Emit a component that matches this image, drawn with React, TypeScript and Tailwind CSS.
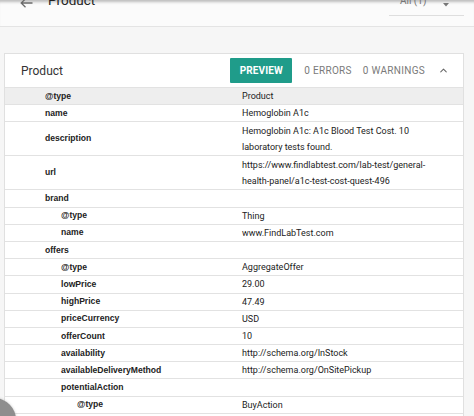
import { ChevronUp } from 'lucide-react';

type Row = {
  k: string;
  v: string[];
  level: number;
  head?: boolean;
};

const rows: Row[] = [
  { k: '@type', v: ['Product'], level: 0, head: true },
  { k: 'name', v: ['Hemoglobin A1c'], level: 0 },
  { k: 'description', v: ['Hemoglobin A1c: A1c Blood Test Cost. 10', 'laboratory tests found.'], level: 0 },
  { k: 'url', v: ['https://www.findlabtest.com/lab-test/general-', 'health-panel/a1c-test-cost-quest-496'], level: 0 },
  { k: 'brand', v: [''], level: 0 },
  { k: '@type', v: ['Thing'], level: 1 },
  { k: 'name', v: ['www.FindLabTest.com'], level: 1 },
  { k: 'offers', v: [''], level: 0 },
  { k: '@type', v: ['AggregateOffer'], level: 1 },
  { k: 'lowPrice', v: ['29.00'], level: 1 },
  { k: 'highPrice', v: ['47.49'], level: 1 },
  { k: 'priceCurrency', v: ['USD'], level: 1 },
  { k: 'offerCount', v: ['10'], level: 1 },
  { k: 'availability', v: ['http://schema.org/InStock'], level: 1 },
  { k: 'availableDeliveryMethod', v: ['http://schema.org/OnSitePickup'], level: 1 },
  { k: 'potentialAction', v: [''], level: 1 },
  { k: '@type', v: ['BuyAction'], level: 2 },
  { k: '', v: [''], level: 2 },
];

const indent = ['pl-[40px]', 'pl-[56px]', 'pl-[72px]'];

function DataRow({ row }: { row: Row }) {
  const tall = row.v.length > 1;
  return (
    <div
      className={`flex border-b border-[#e2e2e2] ${tall ? 'h-[34px]' : 'h-[17.2px]'} ${
        row.head ? 'bg-[#eeeeee]' : 'bg-white'
      }`}
    >
      <div
        className={`w-[232px] shrink-0 flex items-center ${indent[row.level]} font-['Liberation_Sans',sans-serif] font-bold text-[8.6px] text-[#222]`}
      >
        {row.k}
      </div>
      <div className="flex-1 flex flex-col justify-center pl-[5px] text-[9px] leading-[16px] text-[#222]">
        {row.v.map((line, i) => (
          <span key={i} className="whitespace-nowrap">
            {line}
          </span>
        ))}
      </div>
    </div>
  );
}

export default function App() {
  return (
    <div className="relative h-[416px] w-[474px] overflow-hidden bg-[#f6f6f6] font-['Roboto',sans-serif]">
      {/* top toolbar, scrolled so it is partly hidden */}
      <div className="relative h-[27px] bg-[#fbfbfb] border-b border-[#e4e4e4] shadow-[inset_0_4px_3px_-2px_rgba(0,0,0,0.25)] flex items-start">
        <svg
          className="ml-[20px] mt-[-2px]"
          width="13"
          height="10"
          viewBox="0 0 13 10"
          fill="none"
          stroke="#6b6b6b"
          strokeWidth="1.3"
        >
          <path d="M12.5 5H1.2M5.5 0.8 1.2 5l4.3 4.2" />
        </svg>
        <span className="ml-[15px] mt-[-10px] text-[13.5px] leading-[20px] text-[#222]">Product</span>
        <div className="ml-auto mr-[10px] w-[75px] h-[16px] border-b border-[#dedede] flex items-start">
          <span className="ml-[11px] mt-[-6px] text-[10px] leading-[14px] text-[#757575]">All (1)</span>
          <svg className="ml-[17px] mt-[3px]" width="6" height="4" viewBox="0 0 6 4">
            <path d="M0 0h6L3 3.5z" fill="#777" />
          </svg>
        </div>
      </div>

      <div className="h-[26px]" />

      {/* card */}
      <div className="ml-[4px] w-[460px] bg-white border border-b-0 border-[#e0e0e0]">
        <div className="h-[34px] flex items-center border-b border-[#e2e2e2]">
          <span className="pl-[16px] text-[12px] text-[#333]">Product</span>
          <div className="ml-auto flex items-center pr-[14px]">
            <button className="h-[25px] w-[62px] bg-[#1f9c8a] text-white text-[10px] font-bold tracking-[0.1px] rounded-[1px]">
              PREVIEW
            </button>
            <span className="ml-[12px] text-[10px] tracking-[0.3px] text-[#7a7a7a]">0 ERRORS</span>
            <span className="ml-[11px] text-[10px] tracking-[0.3px] text-[#7a7a7a]">0 WARNINGS</span>
            <ChevronUp className="ml-[13px] w-[11px] h-[11px] text-[#666]" strokeWidth={2.2} />
          </div>
        </div>
        {rows.map((r, i) => (
          <DataRow key={i} row={r} />
        ))}
      </div>

      {/* floating circle bottom-left */}
      <div className="absolute left-[-28px] top-[398px] w-[44px] h-[44px] rounded-full bg-[#8e8e8e] shadow-[0_0_3px_rgba(0,0,0,0.2)]" />
    </div>
  );
}
